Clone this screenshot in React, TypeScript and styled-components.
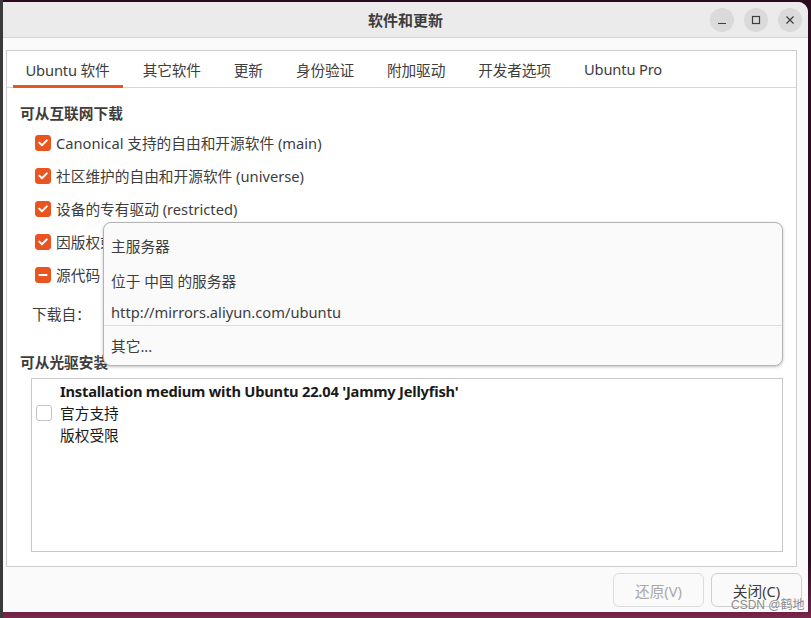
import React from 'react';
import styled, { createGlobalStyle } from 'styled-components';

const GlobalStyle = createGlobalStyle`
  html, body {
    margin: 0;
    padding: 0;
    background: #2c0b22;
  }
  body {
    font-family: 'Noto Sans', 'Noto Sans CJK SC', sans-serif;
    font-size: 14.7px;
    color: #3d3d3d;
  }
`;

const tabs = ['Ubuntu 软件', '其它软件', '更新', '身份验证', '附加驱动', '开发者选项', 'Ubuntu Pro'];

const sources = [
  { label: 'Canonical 支持的自由和开源软件 (main)', state: 'checked' },
  { label: '社区维护的自由和开源软件 (universe)', state: 'checked' },
  { label: '设备的专有驱动 (restricted)', state: 'checked' },
  { label: '因版权或法律问题受限的软件 (multiverse)', state: 'checked' },
  { label: '源代码', state: 'mixed' },
] as const;

type CheckState = 'checked' | 'mixed' | 'off';

const Check = ({ state }: { state: CheckState }) => (
  <StyledCheck $on={state !== 'off'}>
    {state === 'checked' && (
      <svg width="12" height="12" viewBox="0 0 12 12">
        <path d="M2.3 5.6 L5 8.2 L9.8 3.4" fill="none" stroke="#fff" strokeWidth="2" strokeLinecap="round" strokeLinejoin="round" />
      </svg>
    )}
    {state === 'mixed' && (
      <svg width="12" height="12" viewBox="0 0 12 12">
        <path d="M2.5 6 H9.5" stroke="#fff" strokeWidth="2.2" strokeLinecap="round" />
      </svg>
    )}
  </StyledCheck>
);

const App = () => {
  return (
    <>
      <GlobalStyle />
      <Desktop>
        <Window>
          <TitleBar>
            <Title>软件和更新</Title>
            <WindowControls>
              <ControlButton>
                <svg width="10" height="10" viewBox="0 0 10 10">
                  <path d="M1 8.5 H9" stroke="#3d3d3d" strokeWidth="1.2" />
                </svg>
              </ControlButton>
              <ControlButton>
                <svg width="10" height="10" viewBox="0 0 10 10">
                  <rect x="1.5" y="1.5" width="7" height="7" fill="none" stroke="#3d3d3d" strokeWidth="1.2" />
                </svg>
              </ControlButton>
              <ControlButton>
                <svg width="10" height="10" viewBox="0 0 10 10">
                  <path d="M1.5 1.5 L8.5 8.5 M8.5 1.5 L1.5 8.5" stroke="#3d3d3d" strokeWidth="1.2" />
                </svg>
              </ControlButton>
            </WindowControls>
          </TitleBar>

          <Body>
            <Notebook>
              <TabBar>
                {tabs.map((t, i) => (
                  <Tab key={t} $active={i === 0}>
                    {t}
                  </Tab>
                ))}
              </TabBar>

              <Page>
                <SectionTitle>可从互联网下载</SectionTitle>
                <CheckList>
                  {sources.map((s) => (
                    <CheckRow key={s.label}>
                      <Check state={s.state} />
                      <span>{s.label}</span>
                    </CheckRow>
                  ))}
                </CheckList>

                <DownloadRow>
                  <FieldLabel>下载自：</FieldLabel>
                  <Popup>
                    <PopupItem $h={36}>主服务器</PopupItem>
                    <PopupItem $h={35}>位于 中国 的服务器</PopupItem>
                    <PopupItem $h={27}>http://mirrors.aliyun.com/ubuntu</PopupItem>
                    <PopupSeparator />
                    <PopupItem $h={38}>其它...</PopupItem>
                  </Popup>
                </DownloadRow>

                <SectionTitle $top={21}>可从光驱安装</SectionTitle>
                <MediaList>
                  <MediaRow>
                    <Check state="off" />
                    <MediaText>
                      <strong>Installation medium with Ubuntu 22.04 'Jammy Jellyfish'</strong>
                      <span>官方支持</span>
                      <span>版权受限</span>
                    </MediaText>
                  </MediaRow>
                </MediaList>
              </Page>
            </Notebook>

            <ActionBar>
              <ActionButton disabled>还原(V)</ActionButton>
              <ActionButton>关闭(C)</ActionButton>
            </ActionBar>
          </Body>
        </Window>
        <Watermark>CSDN @鹤地</Watermark>
      </Desktop>
    </>
  );
};

export default App;

const Desktop = styled.div`
  position: relative;
  width: 811px;
  height: 618px;
  box-sizing: border-box;
  padding: 2px 3px 0 0;
  border-left: 3px solid #3a3a3a;
  background: linear-gradient(
    to bottom,
    #2c0b22 0,
    #2c0b22 560px,
    #6e2146 612px,
    #7a2a48 618px
  );
  overflow: hidden;
`;

const Window = styled.div`
  width: 805px;
  height: 610px;
  background: #fafafa;
  border-top-right-radius: 10px;
  display: flex;
  flex-direction: column;
  overflow: hidden;
`;

const TitleBar = styled.div`
  position: relative;
  height: 35px;
  flex: none;
  background: #ebebeb;
  border-bottom: 1px solid #d6d6d6;
  display: flex;
  align-items: center;
  justify-content: center;
`;

const Title = styled.div`
  font-weight: bold;
  font-size: 15px;
  color: #3d3d3d;
`;

const WindowControls = styled.div`
  position: absolute;
  right: 6px;
  top: 6px;
  display: flex;
  gap: 10px;
`;

const ControlButton = styled.div`
  width: 24px;
  height: 24px;
  border-radius: 50%;
  background: #dadada;
  display: flex;
  align-items: center;
  justify-content: center;
`;

const Body = styled.div`
  flex: 1;
  display: flex;
  flex-direction: column;
  padding: 12px 6px 5px 3px;
`;

const Notebook = styled.div`
  width: 791px;
  height: 517px;
  box-sizing: border-box;
  border: 1px solid #cdcdcd;
  background: #fff;
  display: flex;
  flex-direction: column;
`;

const TabBar = styled.div`
  height: 36px;
  flex: none;
  display: flex;
  padding-left: 2px;
  border-bottom: 1px solid #d6d6d6;
`;

const Tab = styled.div<{ $active?: boolean }>`
  position: relative;
  padding: 0 16.5px;
  display: flex;
  align-items: center;
  color: #3d3d3d;
  white-space: nowrap;
  letter-spacing: -0.15px;

  &::after {
    content: '';
    position: absolute;
    left: 4px;
    right: 3px;
    bottom: -1px;
    height: 3px;
    background: ${({ $active }) => ($active ? '#e95420' : 'transparent')};
  }
`;

const Page = styled.div`
  flex: 1;
  display: flex;
  flex-direction: column;
  padding: 14px 13px 14px 13px;
`;

const SectionTitle = styled.div<{ $top?: number }>`
  font-weight: bold;
  line-height: 22px;
  margin-top: ${({ $top }) => $top ?? 0}px;
`;

const CheckList = styled.div`
  display: flex;
  flex-direction: column;
  margin-top: 2px;
  padding-left: 15px;
`;

const CheckRow = styled.div`
  height: 33px;
  display: flex;
  align-items: center;
  gap: 5px;
  white-space: nowrap;
`;

const StyledCheck = styled.span<{ $on: boolean }>`
  flex: none;
  width: 16px;
  height: 16px;
  box-sizing: border-box;
  border-radius: 3px;
  background: ${({ $on }) => ($on ? '#e95420' : '#fff')};
  border: 1px solid ${({ $on }) => ($on ? '#e95420' : '#c4c4c4')};
  display: flex;
  align-items: center;
  justify-content: center;
`;

const DownloadRow = styled.div`
  position: relative;
  height: 34px;
  margin-top: 5px;
  display: flex;
  align-items: center;
`;

const FieldLabel = styled.span`
  padding-left: 12px;
`;

const Popup = styled.div`
  position: absolute;
  left: 83px;
  top: -74px;
  width: 680px;
  height: 144px;
  box-sizing: border-box;
  padding: 4px 0;
  background: #fafafa;
  border: 1px solid #b4b4b4;
  border-radius: 8px;
  box-shadow: 0 1px 3px rgba(0, 0, 0, 0.25);
  display: flex;
  flex-direction: column;
  z-index: 2;
`;

const PopupItem = styled.div<{ $h: number }>`
  height: ${({ $h }) => $h}px;
  flex: none;
  display: flex;
  align-items: center;
  padding-left: 7px;
  color: #3d3d3d;
`;

const PopupSeparator = styled.div`
  height: 1px;
  flex: none;
  background: #dcdcdc;
`;

const MediaList = styled.div`
  margin: 5px 0 0 11px;
  flex: 1;
  border: 1px solid #c8c8c8;
  padding: 1px 0 0 4px;
`;

const MediaRow = styled.div`
  display: flex;
  align-items: center;
  gap: 8px;
`;

const MediaText = styled.div`
  display: flex;
  flex-direction: column;
  line-height: 22px;
  color: #1a1a1a;

  strong {
    font-weight: bold;
    letter-spacing: -0.22px;
  }
`;

const ActionBar = styled.div`
  margin-top: 6px;
  display: flex;
  justify-content: flex-end;
  gap: 7px;
`;

const ActionButton = styled.button`
  width: 91px;
  height: 34px;
  box-sizing: border-box;
  border: 1px solid #cfcfcf;
  border-radius: 6px;
  background: #fafafa;
  font-family: inherit;
  font-size: 14.7px;
  color: #3d3d3d;
  padding: 0;

  &:disabled {
    color: #a8a8a8;
    border-color: #dcdcdc;
  }
`;

const Watermark = styled.div`
  position: absolute;
  left: 728px;
  top: 595px;
  font-size: 12px;
  color: #8c8c8c;
  font-family: 'Liberation Sans', 'Noto Sans CJK SC', sans-serif;
  text-shadow: 0 0 1px rgba(255, 255, 255, 0.6);
  pointer-events: none;
`;
